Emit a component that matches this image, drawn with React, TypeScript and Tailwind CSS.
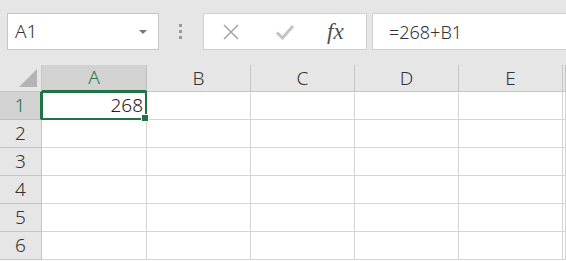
import React from "react";

const cols = ["A", "B", "C", "D", "E", ""];
const rows = [1, 2, 3, 4, 5, 6];

const App = () => {
  return (
    <div
      className="w-[566px] h-[261px] overflow-hidden bg-white text-[#333] font-light"
      style={{ fontFamily: '"Noto Sans", "Noto Sans CJK SC", sans-serif' }}
    >
      {/* formula bar */}
      <div className="h-[65px] bg-[#e6e6e6] flex items-start pt-[13px]">
        <div className="ml-[7px] w-[152px] h-[37px] bg-white border border-[#c6c6c6] flex items-center justify-between pl-[7px] pr-[11px]">
          <span className="text-[19px] leading-none text-[#333]">A1</span>
          <svg width="8" height="4" viewBox="0 0 8 4">
            <path d="M0 0h8L4 4z" fill="#777" />
          </svg>
        </div>
        <div className="ml-[20px] mt-[11px] flex flex-col gap-[3px]">
          <div className="w-[3px] h-[3px] bg-[#9a9a9a]" />
          <div className="w-[3px] h-[3px] bg-[#9a9a9a]" />
          <div className="w-[3px] h-[3px] bg-[#9a9a9a]" />
        </div>
        <div className="ml-[21px] w-[164px] h-[37px] bg-white border border-[#d0d0d0] flex items-center pl-[18px]">
          <svg width="18" height="18" viewBox="0 0 18 18">
            <path d="M2 2L16 16M16 2L2 16" stroke="#a6a6a6" strokeWidth="1.6" />
          </svg>
          <svg className="ml-[35px]" width="20" height="18" viewBox="0 0 20 18">
            <path d="M2 9.5L7.5 15L18 3" stroke="#c4c4c4" strokeWidth="3" fill="none" />
          </svg>
          <span
            className="ml-[32px] text-[23px] italic font-normal leading-none text-[#505050]"
            style={{ fontFamily: '"Liberation Serif", serif' }}
          >
            fx
          </span>
        </div>
        <div className="ml-[5px] flex-1 h-[37px] bg-white border border-[#d0d0d0] border-r-0 flex items-center pl-[16px]">
          <span className="text-[18px] leading-none text-[#333]">=268+B1</span>
        </div>
      </div>

      {/* sheet */}
      <div className="grid grid-cols-[42px_105px_104px_104px_104px_104px_1fr] grid-rows-[27px_28px_28px_28px_28px_28px_28px]">
        <div className="bg-[#e6e6e6] border-r border-b border-[#c6c6c6] relative">
          <svg className="absolute right-[4px] bottom-[4px]" width="18" height="18" viewBox="0 0 18 18">
            <path d="M18 0V18H0z" fill="#b4b4b4" />
          </svg>
        </div>
        {cols.map((c, i) => (
          <div
            key={"h" + i}
            className={
              i === 0
                ? "bg-[#d2d2d2] border-r border-b-2 border-b-[#217346] border-r-[#bfbfbf] flex items-center justify-center text-[19px] text-[#217346]"
                : "bg-[#e6e6e6] border-r border-b border-[#c6c6c6] flex items-center justify-center text-[19px] text-[#333]"
            }
          >
            {c}
          </div>
        ))}
        {rows.map((r) => (
          <React.Fragment key={r}>
            <div
              className={
                r === 1
                  ? "bg-[#d2d2d2] border-r-2 border-r-[#217346] border-b border-b-[#bfbfbf] flex items-center justify-center text-[19px] text-[#217346]"
                  : "bg-[#e6e6e6] border-r border-b border-[#c6c6c6] flex items-center justify-center text-[19px] text-[#333]"
              }
            >
              {r}
            </div>
            {cols.map((c, i) =>
              r === 1 && i === 0 ? (
                <div
                  key={c + r}
                  className="relative -mt-[1px] -ml-[1px] border-2 border-[#217346] flex items-center justify-end pr-[2px] text-[19px] text-[#222]"
                >
                  268
                  <div className="absolute -right-[4px] -bottom-[4px] w-[6px] h-[6px] bg-[#217346] border border-white box-content" />
                </div>
              ) : (
                <div key={c + r + i} className="border-r border-b border-[#d4d4d4]" />
              )
            )}
          </React.Fragment>
        ))}
      </div>
    </div>
  );
};

export default App;
